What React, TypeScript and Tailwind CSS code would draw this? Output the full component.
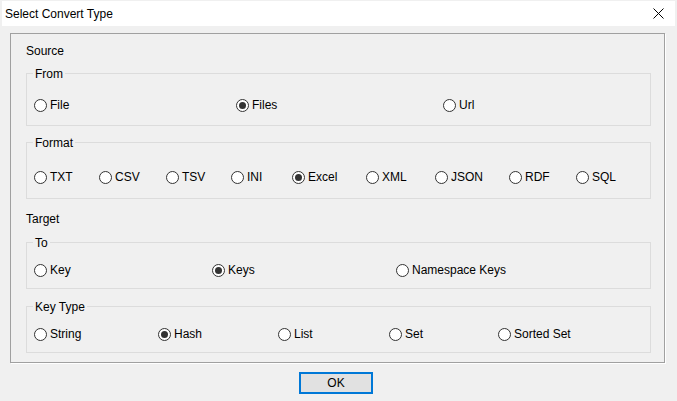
import type { ReactNode } from 'react';

type Option = { label: string; w: string; checked?: boolean };

const fromOptions: Option[] = [
    { label: 'File', w: 'w-[202px]' },
    { label: 'Files', w: 'w-[207px]', checked: true },
    { label: 'Url', w: 'w-[60px]' },
];

const formatOptions: Option[] = [
    { label: 'TXT', w: 'w-[65px]' },
    { label: 'CSV', w: 'w-[67px]' },
    { label: 'TSV', w: 'w-[65px]' },
    { label: 'INI', w: 'w-[61px]' },
    { label: 'Excel', w: 'w-[74px]', checked: true },
    { label: 'XML', w: 'w-[69px]' },
    { label: 'JSON', w: 'w-[74px]' },
    { label: 'RDF', w: 'w-[67px]' },
    { label: 'SQL', w: 'w-[50px]' },
];

const toOptions: Option[] = [
    { label: 'Key', w: 'w-[178px]' },
    { label: 'Keys', w: 'w-[184px]', checked: true },
    { label: 'Namespace Keys', w: 'w-[120px]' },
];

const keyTypeOptions: Option[] = [
    { label: 'String', w: 'w-[124px]' },
    { label: 'Hash', w: 'w-[120px]', checked: true },
    { label: 'List', w: 'w-[111px]' },
    { label: 'Set', w: 'w-[109px]' },
    { label: 'Sorted Set', w: 'w-[90px]' },
];

function Radio({ label, checked, w }: Option) {
    return (
        <div className={`flex items-center h-4 shrink-0 ${w}`}>
            <span className="w-[13px] h-[13px] rounded-full border border-[#333333] bg-white flex items-center justify-center shrink-0">
                {checked && <span className="w-[7px] h-[7px] rounded-full bg-[#333333]" />}
            </span>
            <span className="ml-[3px] whitespace-nowrap">{label}</span>
        </div>
    );
}

function GroupBox({ title, className, children }: { title: string; className: string; children: ReactNode }) {
    return (
        <div className={`relative border border-[#dcdcdc] pl-[7px] ${className}`}>
            {/* caption sits on top of the border line */}
            <span className="absolute top-[-8px] left-[6px] px-[2px] h-4 leading-4 bg-[#f0f0f0]">{title}</span>
            {children}
        </div>
    );
}

function Row({ options }: { options: Option[] }) {
    return (
        <div className="flex">
            {options.map((o) => (
                <Radio key={o.label} {...o} />
            ))}
        </div>
    );
}

export default function App() {
    return (
        <div
            className="w-[677px] h-[401px] bg-[#f0f0f0] overflow-hidden text-[12px] leading-4 text-black"
            style={{ fontFamily: '"Liberation Sans", Arial, sans-serif' }}
        >
            {/* Title bar */}
            <div className="mt-[1px] ml-[2px] mr-[2px] h-[25px] bg-white flex items-center justify-between pl-[3px] pr-[11px]">
                <span className="text-[12px]">Select Convert Type</span>
                <svg width="11" height="11" viewBox="0 0 11 11" className="text-black">
                    <path d="M0.5 0.5 L10.5 10.5 M10.5 0.5 L0.5 10.5" stroke="currentColor" strokeWidth="1" />
                </svg>
            </div>

            {/* Client area */}
            <div className="pl-[10px] pt-[7px]">
                <div className="w-[655px] border border-[#a0a0a0] shadow-[1px_1px_0_#ffffff] pt-[9px] pl-[15px] pr-[13px] pb-[9px]">
                    <div className="h-4">Source</div>

                    <GroupBox title="From" className="mt-[14px] pt-[23px] pb-[12px]">
                        <Row options={fromOptions} />
                    </GroupBox>

                    <GroupBox title="Format" className="mt-[16px] pt-[26px] pb-[13px]">
                        <Row options={formatOptions} />
                    </GroupBox>

                    <div className="h-4 mt-[12px]">Target</div>

                    <GroupBox title="To" className="mt-[15px] pt-[19px] pb-[10px]">
                        <Row options={toOptions} />
                    </GroupBox>

                    <GroupBox title="Key Type" className="mt-[17px] pt-[19px] pb-[10px]">
                        <Row options={keyTypeOptions} />
                    </GroupBox>
                </div>

                <div className="pl-[289px] pt-[9px]">
                    <button className="w-[74px] h-[22px] border-2 border-[#0078d7] bg-[#e1e1e1] flex items-center justify-center">
                        OK
                    </button>
                </div>
            </div>
        </div>
    );
}
